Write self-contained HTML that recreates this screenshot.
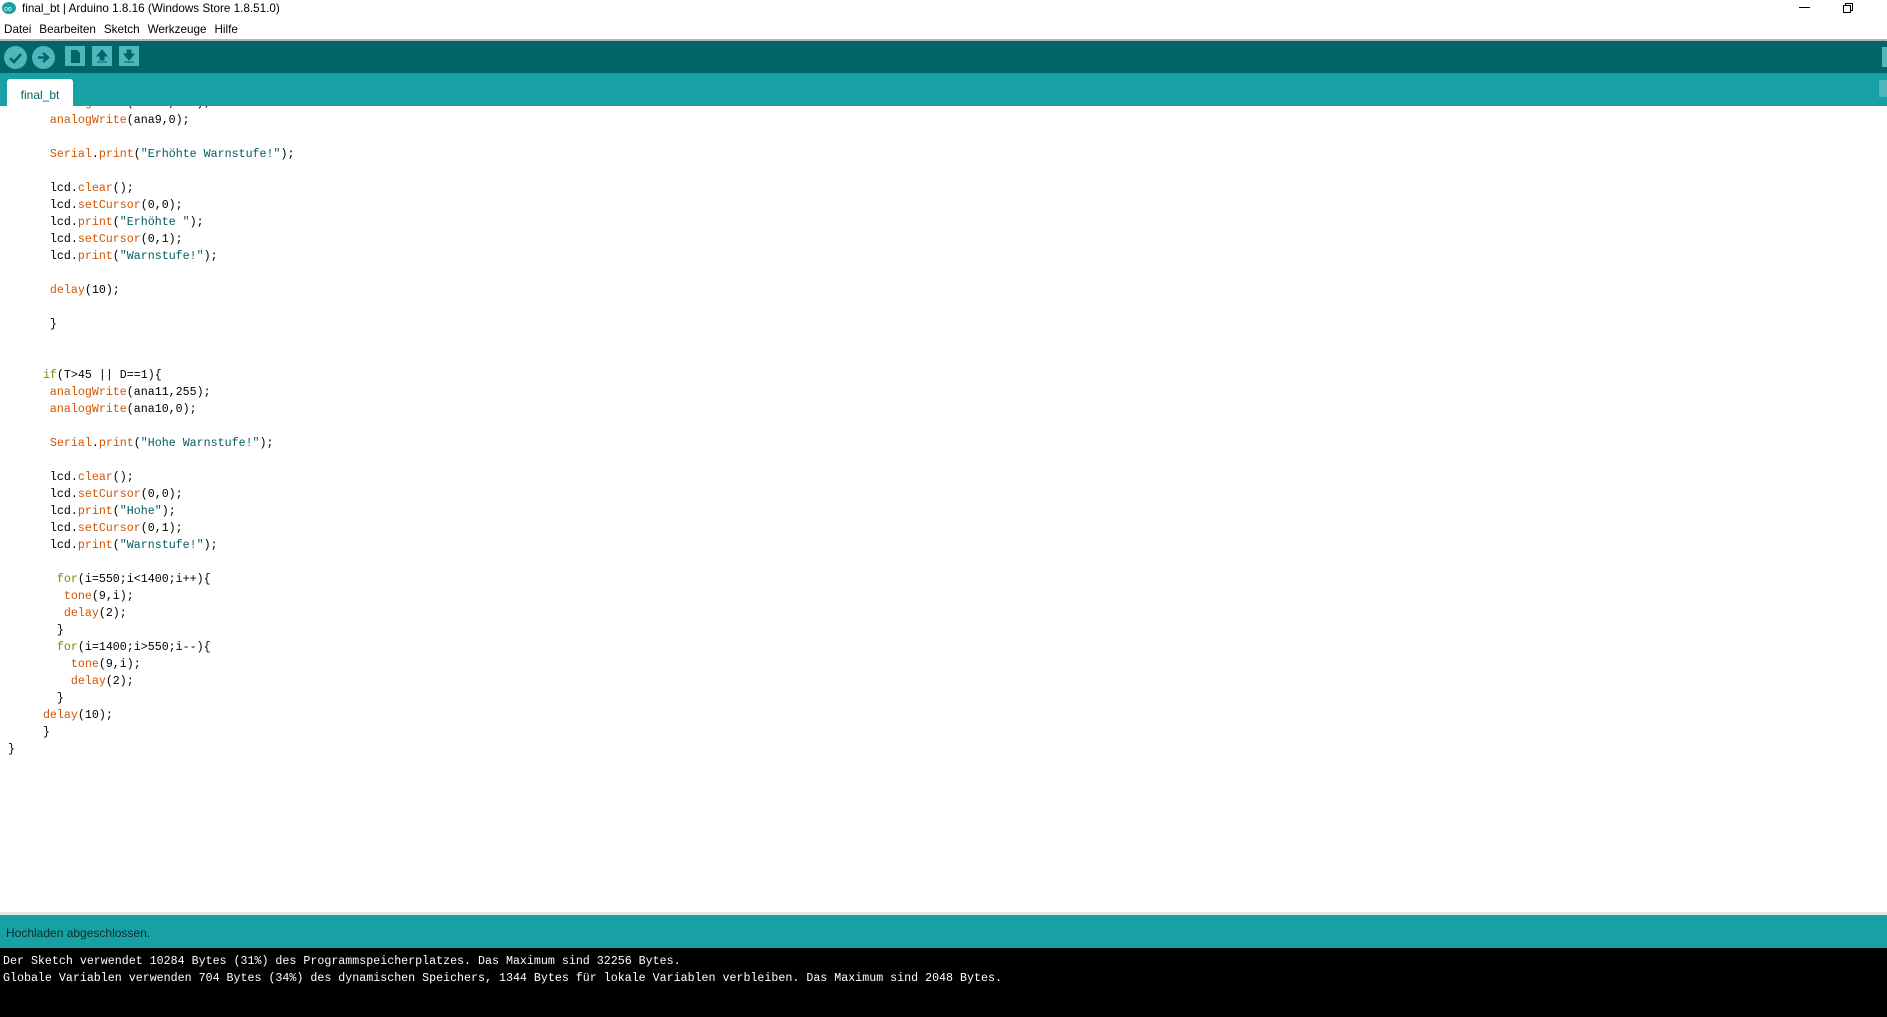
<!DOCTYPE html>
<html><head><meta charset="utf-8"><style>
*{margin:0;padding:0;box-sizing:border-box}
body{width:1887px;height:1017px;overflow:hidden;background:#fff;font-family:"Liberation Sans",sans-serif;position:relative}
.title{position:absolute;left:0;top:0;height:20px;width:1887px;font-size:11.7px;line-height:17px;color:#000}
.menu{position:absolute;left:4px;top:22px;font-size:11.7px;line-height:16px}
.menu span{margin-right:8px}
.sep{position:absolute;top:39px;left:0;width:1887px;height:2px;background:#b4b4b4}
.tool{position:absolute;top:41px;left:0;width:1887px;height:32px;background:#006468}
.tabs{position:absolute;top:73px;left:0;width:1887px;height:33px;background:#17a1a5}
.tab{position:absolute;left:7px;top:6px;width:66px;height:27px;background:#fff;border-radius:3px 3px 0 0;color:#006468;font-size:12px;text-align:center;line-height:33px}
.circ{position:absolute;top:5px;width:23px;height:23px;border-radius:50%;background:#4db7bb}
.sq{position:absolute;top:5px;width:20px;height:20px;background:#4db7bb}
.editor{position:absolute;top:106px;left:0;width:1887px;height:806px;overflow:hidden;background:#fff}
pre{position:absolute;left:8px;top:-11px;font-family:"Liberation Mono",monospace;font-size:11.65px;line-height:17px;color:#000}
.f{color:#d35400}.k{color:#728e00}.s{color:#005c60}
.gbar{position:absolute;top:912px;left:0;width:1887px;height:3px;background:#e6e6e6}
.status{position:absolute;top:915px;left:0;width:1887px;height:33px;background:#17a1a5;color:#0d2a2b;font-size:12px;line-height:36px;padding-left:6px}
.console{position:absolute;top:948px;left:0;width:1887px;height:69px;background:#000}
.console pre{color:#fff;left:3px;top:5px;font-size:11.65px;line-height:17px}
</style></head><body>
<div class="title"><svg style="position:absolute;left:2px;top:2px" width="14" height="12"><ellipse cx="7" cy="6" rx="7" ry="6" fill="#17a1a5"/><text x="2" y="9" font-size="7" fill="#fff" font-family="Liberation Sans">oo</text></svg><span style="position:absolute;left:22px;top:0">final_bt | Arduino 1.8.16 (Windows Store 1.8.51.0)</span>
<div style="position:absolute;left:1799px;top:7px;width:11px;height:1px;background:#000"></div>
<div style="position:absolute;left:1845px;top:3px;width:8px;height:8px;border:1px solid #000"></div>
<div style="position:absolute;left:1843px;top:5px;width:8px;height:8px;border:1px solid #000;background:#fff"></div>
</div>
<div class="menu"><span>Datei</span><span>Bearbeiten</span><span>Sketch</span><span>Werkzeuge</span><span>Hilfe</span></div>
<div class="sep"></div>
<div class="tool">
<div class="circ" style="left:4px"><svg width="23" height="23"><path d="M6 12l4 4 7-8" stroke="#006468" stroke-width="2.5" fill="none"/></svg></div>
<div class="circ" style="left:32px"><svg width="23" height="23"><path d="M6 11.5h8M11 7l5 4.5-5 4.5" stroke="#006468" stroke-width="2.5" fill="none"/></svg></div>
<div class="sq" style="left:65px"><svg width="20" height="20"><path d="M6 4h6l3 3v10H6z" fill="#006468"/></svg></div>
<div class="sq" style="left:92px"><svg width="20" height="20"><path d="M10 4l5 6h-3v4H8v-4H5z M5 16h10" fill="#006468" stroke="#006468" stroke-width="1"/></svg></div>
<div class="sq" style="left:119px"><svg width="20" height="20"><path d="M10 14l5-6h-3V4H8v4H5z M5 16h10" fill="#006468" stroke="#006468" stroke-width="1"/></svg></div>
<div style="position:absolute;left:1882px;top:6px;width:5px;height:20px;background:#4db7bb"></div>
</div>
<div class="tabs"><div class="tab">final_bt</div><div style="position:absolute;left:1879px;top:7px;width:8px;height:17px;background:#4db7bb"></div></div>
<div class="editor"><pre>      <span class="f">analogWrite</span>(ana10,255);
      <span class="f">analogWrite</span>(ana9,0);

      <span class="f">Serial</span>.<span class="f">print</span>(<span class="s">"Erhöhte Warnstufe!"</span>);

      lcd.<span class="f">clear</span>();
      lcd.<span class="f">setCursor</span>(0,0);
      lcd.<span class="f">print</span>(<span class="s">"Erhöhte "</span>);
      lcd.<span class="f">setCursor</span>(0,1);
      lcd.<span class="f">print</span>(<span class="s">"Warnstufe!"</span>);

      <span class="f">delay</span>(10);

      }


     <span class="k">if</span>(T&gt;45 || D==1){
      <span class="f">analogWrite</span>(ana11,255);
      <span class="f">analogWrite</span>(ana10,0);

      <span class="f">Serial</span>.<span class="f">print</span>(<span class="s">"Hohe Warnstufe!"</span>);

      lcd.<span class="f">clear</span>();
      lcd.<span class="f">setCursor</span>(0,0);
      lcd.<span class="f">print</span>(<span class="s">"Hohe"</span>);
      lcd.<span class="f">setCursor</span>(0,1);
      lcd.<span class="f">print</span>(<span class="s">"Warnstufe!"</span>);

       <span class="k">for</span>(i=550;i&lt;1400;i++){
        <span class="f">tone</span>(9,i);
        <span class="f">delay</span>(2);
       }
       <span class="k">for</span>(i=1400;i&gt;550;i--){
         <span class="f">tone</span>(9,i);
         <span class="f">delay</span>(2);
       }
     <span class="f">delay</span>(10);
     }
}</pre></div>
<div class="gbar"></div>
<div class="status">Hochladen abgeschlossen.</div>
<div class="console"><pre>Der Sketch verwendet 10284 Bytes (31%) des Programmspeicherplatzes. Das Maximum sind 32256 Bytes.
Globale Variablen verwenden 704 Bytes (34%) des dynamischen Speichers, 1344 Bytes für lokale Variablen verbleiben. Das Maximum sind 2048 Bytes.</pre></div>
</body></html>
